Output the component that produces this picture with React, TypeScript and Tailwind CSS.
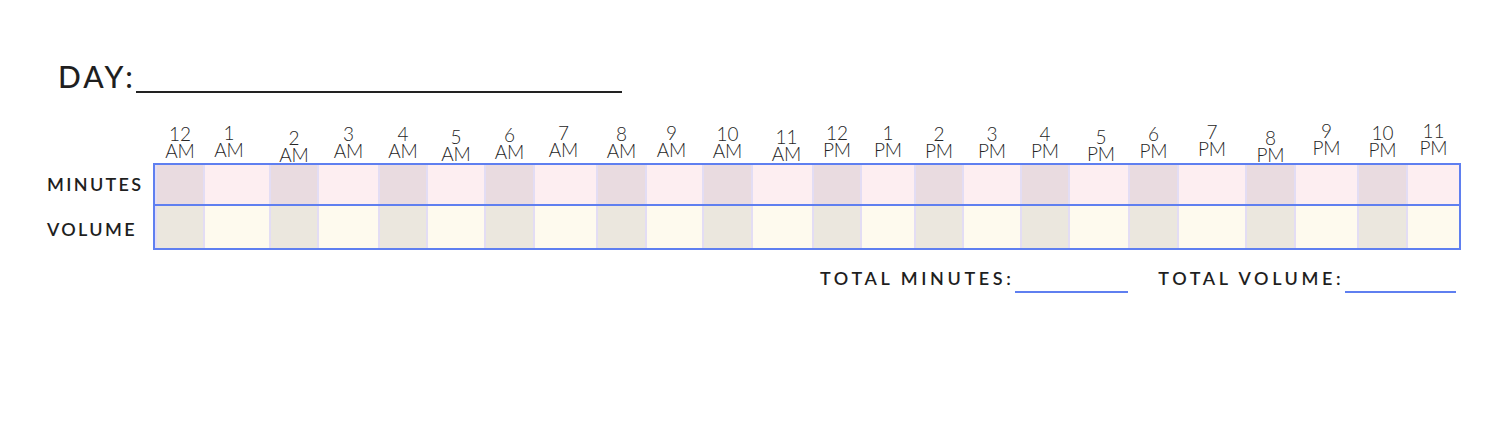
const hours = [
  { n: "12", p: "AM", c: "mt-[1px]" },
  { n: "1", p: "AM", c: "mt-0 pr-4" },
  { n: "2", p: "AM", c: "mt-[5px]" },
  { n: "3", p: "AM", c: "mt-[1px]" },
  { n: "4", p: "AM", c: "mt-[1px]" },
  { n: "5", p: "AM", c: "mt-[4px]" },
  { n: "6", p: "AM", c: "mt-[2px]" },
  { n: "7", p: "AM", c: "mt-0 pr-1" },
  { n: "8", p: "AM", c: "mt-[1px]" },
  { n: "9", p: "AM", c: "mt-0 pr-[6px]" },
  { n: "10", p: "AM", c: "mt-[1px]" },
  { n: "11", p: "AM", c: "mt-[4px] pl-2" },
  { n: "12", p: "PM", c: "mt-0" },
  { n: "1", p: "PM", c: "mt-0" },
  { n: "2", p: "PM", c: "mt-[1px]" },
  { n: "3", p: "PM", c: "mt-[1px]" },
  { n: "4", p: "PM", c: "mt-[1px]" },
  { n: "5", p: "PM", c: "mt-[4px] pl-1" },
  { n: "6", p: "PM", c: "mt-[1px]" },
  { n: "7", p: "PM", c: "-mt-[1px]" },
  { n: "8", p: "PM", c: "mt-[5px]" },
  { n: "9", p: "PM", c: "-mt-[2px]" },
  { n: "10", p: "PM", c: "mt-0" },
  { n: "11", p: "PM", c: "-mt-[2px]" },
];

const cols =
  "grid grid-cols-[50px_64px_50px_59px_50px_56px_51px_61px_51px_55px_51px_59px_50px_52px_50px_56px_50px_58px_51px_66px_51px_61px_51px_51px]";

function Row({ dark, light, h }: { dark: string; light: string; h: string }) {
  return (
    <div className={`${cols} ${h}`}>
      {hours.map((_, i) =>
        i % 2 === 0 ? (
          <div key={i} className={`${dark} border-x-2 border-[#e3ddf4]`} />
        ) : (
          <div key={i} className={light} />
        )
      )}
    </div>
  );
}

export default function App() {
  return (
    <div className="h-[429px] w-[1500px] bg-white pt-[58px] text-[#1f1f1f] [font-family:Lato,'Open_Sans',sans-serif]">
      {/* Day line */}
      <div className="flex items-end pl-[58px]">
        <span className="text-[30px] font-medium leading-[36px] tracking-[0.1em]">DAY:</span>
        <div className="mb-[1px] h-[2px] w-[486px] bg-[#222]" />
      </div>

      {/* Hour labels */}
      <div className="mt-[30px] flex">
        <div className="w-[155px] shrink-0" />
        <div className={`${cols} h-[39px] items-start`}>
          {hours.map((h, i) => (
            <div
              key={i}
              className={`flex flex-col items-center text-[19px] font-light leading-[17px] text-[#262626] ${h.c}`}
            >
              <span>{h.n}</span>
              <span>{h.p}</span>
            </div>
          ))}
        </div>
      </div>

      {/* Grid */}
      <div className="flex">
        <div className="flex w-[153px] shrink-0 flex-col pl-[47px] pt-[2px] text-[18px] font-semibold tracking-[0.13em]">
          <div className="flex h-[39px] items-center">MINUTES</div>
          <div className="h-[2px]" />
          <div className="flex h-[42px] items-center pt-[5px]">VOLUME</div>
        </div>
        <div className="border-2 border-[#5f7ff0]">
          <Row dark="bg-[#e9dbe0]" light="bg-[#fdeef1]" h="h-[39px]" />
          <div className="h-[2px] bg-[#5f7ff0]" />
          <Row dark="bg-[#ebe7de]" light="bg-[#fefaee]" h="h-[42px]" />
        </div>
      </div>

      {/* Totals */}
      <div className="mt-[17px] flex items-end pl-[820px] text-[18px] font-semibold leading-[22px] tracking-[0.2em]">
        <span>TOTAL MINUTES:</span>
        <div className="mb-[-4px] ml-[1px] h-[2px] w-[113px] bg-[#5f7ff0]" />
        <span className="ml-[30px]">TOTAL VOLUME:</span>
        <div className="mb-[-4px] ml-[1px] h-[2px] w-[111px] bg-[#5f7ff0]" />
      </div>
    </div>
  );
}
